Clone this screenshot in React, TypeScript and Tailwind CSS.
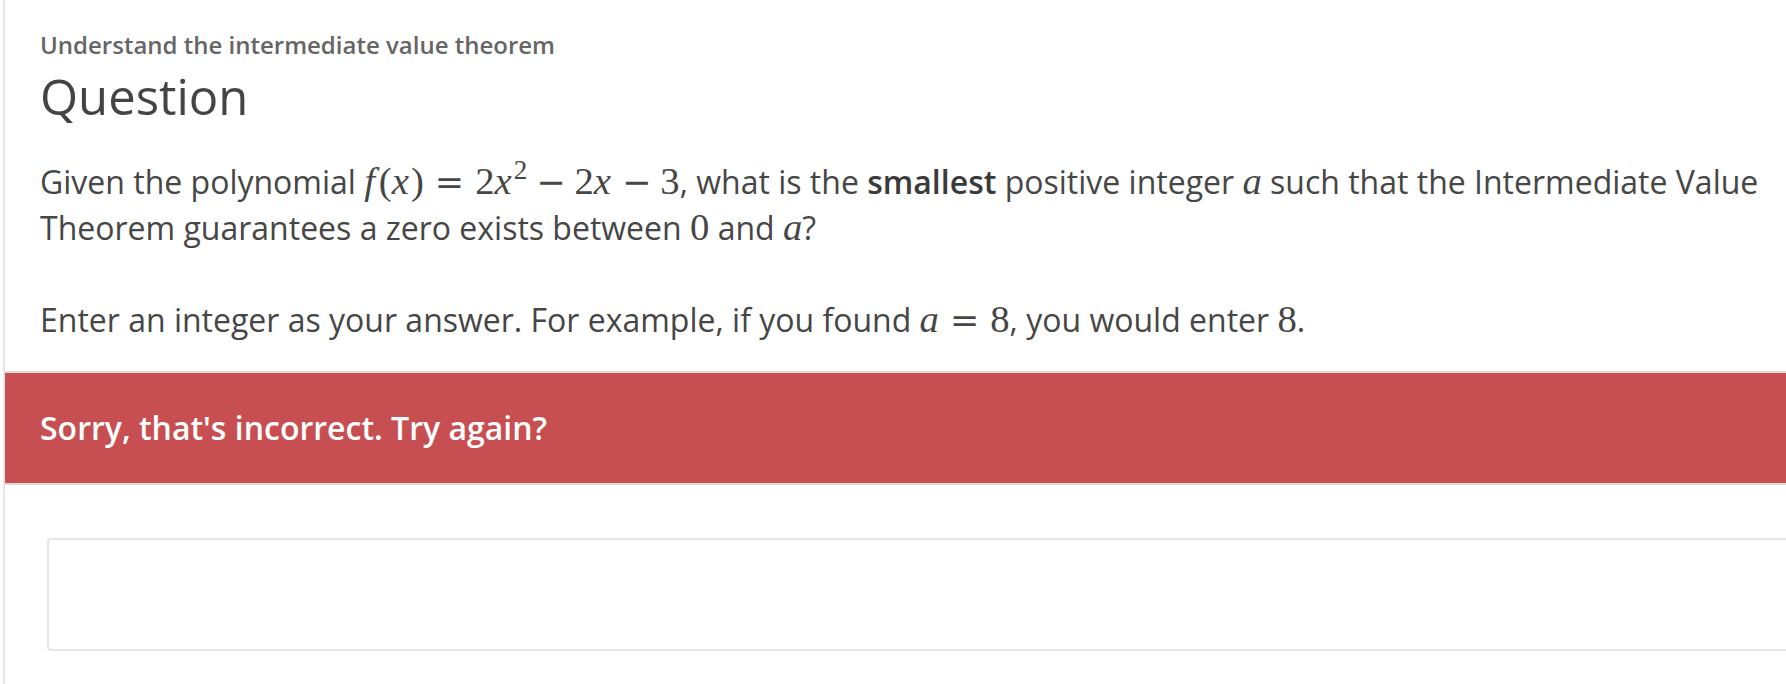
import type { ReactNode } from "react";

const Var = ({ children }: { children: ReactNode }) => (
  <span className="italic">{children}</span>
);

const X = () => <span className="italic pr-[2px]">x</span>;

const Math = ({ children }: { children: ReactNode }) => (
  <span className="font-['Liberation_Serif',serif] text-[38.7px] leading-none whitespace-nowrap">
    {children}
  </span>
);

// relation (=) and binary (−) operators, spaced like TeX
const Rel = ({ children }: { children: ReactNode }) => (
  <span className="mx-[11px] font-['DejaVu_Serif',serif] text-[35px]">{children}</span>
);

const Bin = ({ children }: { children: ReactNode }) => (
  <span className="mx-[9px] font-['DejaVu_Serif',serif] text-[35px]">{children}</span>
);

export default function App() {
  return (
    <div className="min-h-screen bg-white font-['Open_Sans',sans-serif]">
      <div className="ml-[3px] min-h-[684px] border-l-2 border-[#e6e6e6]">
        {/* question text */}
        <div className="pl-[35px] pt-[29px]">
          <div className="text-[24px] leading-[32px] font-semibold text-[#666666]">
            Understand the intermediate value theorem
          </div>
          <h1 className="mt-[7px] text-[49px] leading-[56px] font-normal text-[#444444]">
            Question
          </h1>
          <div className="mt-[35px] text-[32px] leading-[46px] text-[#464646]">
            <p>
              Given the polynomial{" "}
              <Math>
                <Var>f</Var>
                <span className="ml-[0.1em]">(</span>
                <X />)<Rel>=</Rel>2<X />
                <sup className="text-[0.7em] align-[0.55em] top-0">2</sup>
                <Bin>−</Bin>2<X />
                <Bin>−</Bin>3
              </Math>
              , what is the <strong className="font-semibold text-[#3a3a3a]">smallest</strong> positive integer{" "}
              <Math>
                <Var>a</Var>
              </Math>{" "}
              such that the Intermediate Value Theorem guarantees a zero exists between{" "}
              <Math>0</Math> and{" "}
              <Math>
                <Var>a</Var>
              </Math>
              ?
            </p>
            <p className="mt-[46px]">
              Enter an integer as your answer. For example, if you found{" "}
              <Math>
                <Var>a</Var>
                <Rel>=</Rel>8
              </Math>
              , you would enter <Math>8</Math>.
            </p>
          </div>
        </div>

        {/* feedback bar */}
        <div className="mt-[28px] flex h-[114px] items-center border-y-2 border-[#dcdcdc] bg-[#c84f51] pl-[35px]">
          <span className="text-[32px] leading-[46px] font-semibold text-white">
            Sorry, that's incorrect. Try again?
          </span>
        </div>

        {/* answer box */}
        <div className="overflow-hidden pl-[42px] pt-[53px]">
          <div className="-mr-[10px] h-[113px] rounded-[4px] border-2 border-[#e6e6e6] bg-white" />
        </div>
      </div>
    </div>
  );
}
